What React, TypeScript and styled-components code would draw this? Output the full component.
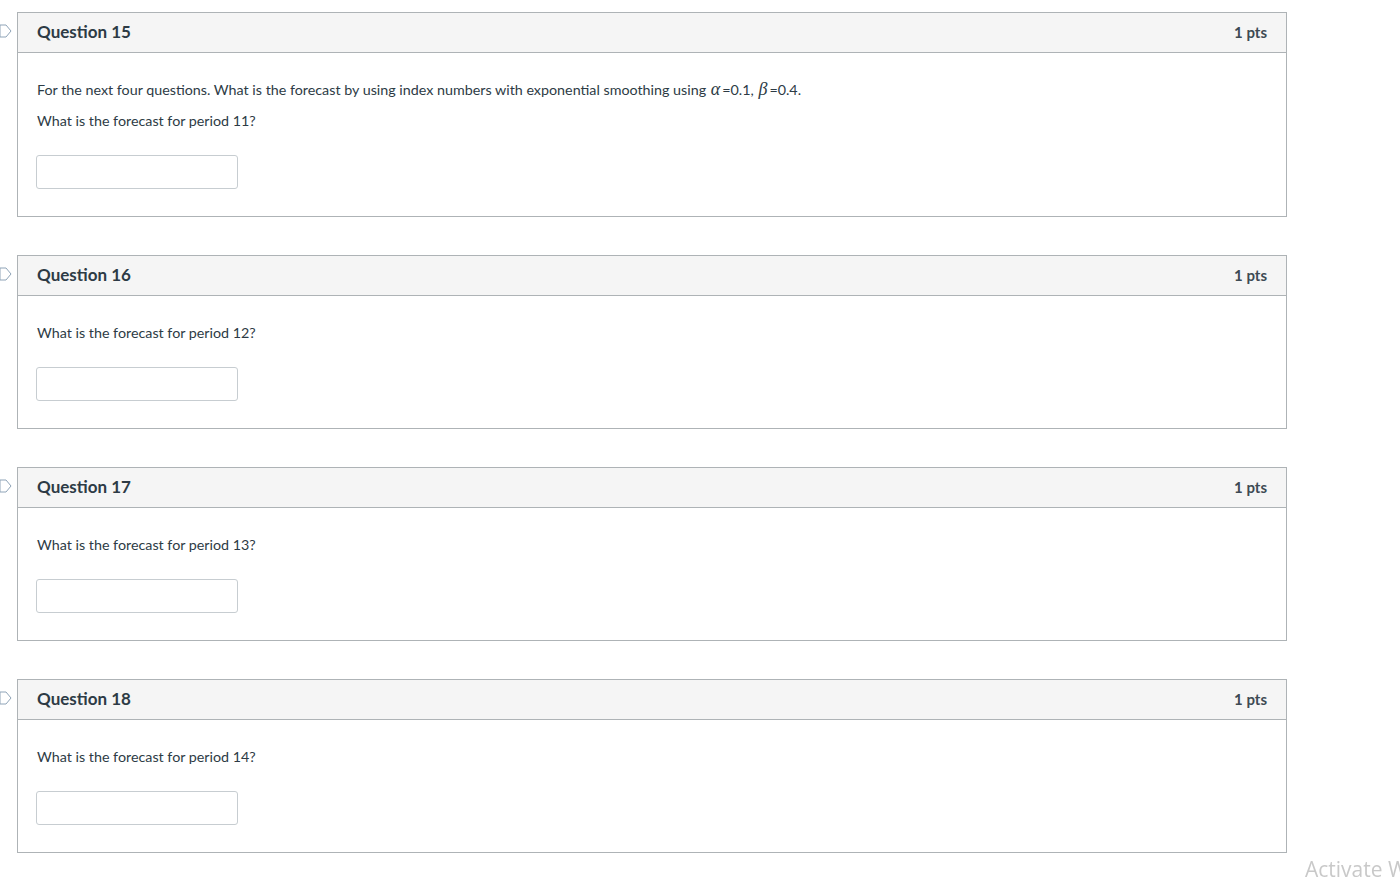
import React from 'react';
import styled, { createGlobalStyle } from 'styled-components';

const Global = createGlobalStyle`
  html, body {
    margin: 0;
    padding: 0;
    background: #fff;
    font-family: Lato, "Open Sans", sans-serif;
    color: #2d3b45;
    overflow: hidden;
  }
`;

const Page = styled.div`
  padding: 12px 0 0 17px;
  display: flex;
  flex-direction: column;
  gap: 38px;
`;

const Card = styled.div`
  position: relative;
  width: 1270px;
  box-sizing: border-box;
  border: 1px solid #aeb3b6;
`;

const Header = styled.div`
  display: flex;
  align-items: center;
  justify-content: space-between;
  height: 40px;
  box-sizing: border-box;
  padding: 0 19px 2px 19px;
  background: #f5f5f5;
  border-bottom: 1px solid #aeb3b6;
`;

const Title = styled.span`
  font-size: 17px;
  font-weight: 700;
  color: #2d3b45;
`;

const Points = styled.span`
  font-size: 15px;
  font-weight: 700;
  color: #3d4a53;
`;

const Body = styled.div`
  padding: 26px 19px 27px;
  display: flex;
  flex-direction: column;
  align-items: flex-start;
`;

const Para = styled.p`
  margin: 0 0 10px;
  font-size: 14.3px;
  line-height: 21px;
`;

const Math = styled.i`
  font-family: "Liberation Serif", serif;
  font-size: 18px;
  line-height: 1;
  padding: 0 2px 0 1px;
`;

const Answer = styled.input`
  margin: 14px 0 0 -1px;
  width: 202px;
  height: 34px;
  box-sizing: border-box;
  border: 1px solid #c7cdd1;
  border-radius: 3px;
  background: #fff;
`;

const Flag = styled.svg`
  position: absolute;
  left: -19px;
  top: 10px;
`;

const Watermark = styled.div`
  position: fixed;
  left: 1305px;
  top: 855px;
  font-family: "Open Sans", sans-serif;
  font-size: 21px;
  color: #c9c9c9;
  white-space: nowrap;
`;

type Q = { n: number; lines: React.ReactNode[] };

const questions: Q[] = [
  {
    n: 15,
    lines: [
      <>
        For the next four questions. What is the forecast by using index numbers with exponential smoothing using{' '}
        <Math>α</Math>=0.1, <Math>β</Math>=0.4.
      </>,
      'What is the forecast for period 11?',
    ],
  },
  { n: 16, lines: ['What is the forecast for period 12?'] },
  { n: 17, lines: ['What is the forecast for period 13?'] },
  { n: 18, lines: ['What is the forecast for period 14?'] },
];

function Question({ n, lines }: Q) {
  return (
    <Card>
      <Flag width="14" height="16" viewBox="0 0 14 16">
        <path d="M1 2 H7 L12 8 L7 14 H1 Z" fill="none" stroke="#8fa4b8" strokeWidth="1" />
      </Flag>
      <Header>
        <Title>Question {n}</Title>
        <Points>1 pts</Points>
      </Header>
      <Body>
        {lines.map((l, i) => (
          <Para key={i}>{l}</Para>
        ))}
        <Answer type="text" />
      </Body>
    </Card>
  );
}

export default function App() {
  return (
    <>
      <Global />
      <Page>
        {questions.map((q) => (
          <Question key={q.n} {...q} />
        ))}
      </Page>
      <Watermark>Activate Windows</Watermark>
    </>
  );
}
